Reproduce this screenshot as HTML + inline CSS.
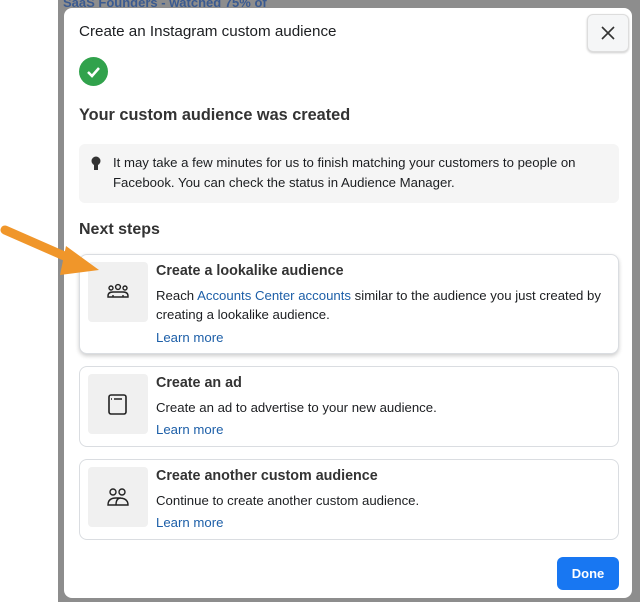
<!DOCTYPE html>
<html><head><style>
body{margin:0;width:640px;height:602px;position:relative;overflow:hidden;background:#fff;font-family:"Liberation Sans",sans-serif;color:#1c1e21}
.ov{position:absolute;left:58px;top:0;width:582px;height:602px;background:#8d8d8d}
.top{position:absolute;left:63px;top:-5px;font-size:13px;color:#3a5a90;font-weight:bold}
.m{position:absolute;left:64px;top:8px;width:568px;height:590px;background:#fff;border-radius:8px}
.t{position:absolute;left:15px;top:15px;font-size:15.2px}
.x{position:absolute;left:523px;top:6px;width:40px;height:36px;border:1px solid #ddd;border-radius:6px;background:#f5f6f7;box-shadow:0 1px 2px rgba(0,0,0,.2)}
.ck{position:absolute;left:15px;top:49px;width:29px;height:29px;border-radius:50%;background:#31a24c}
h2{position:absolute;left:15px;top:98px;margin:0;font-size:16.3px;font-weight:bold;color:#333}
.info{position:absolute;left:15px;top:136px;width:540px;height:59px;background:#f5f5f5;border-radius:6px;font-size:13.2px;line-height:20px}
.info p{margin:0;position:absolute;left:34px;top:9px}
.ns{position:absolute;left:15px;top:213px;font-size:16px;font-weight:bold;color:#333}
.c{position:absolute;left:15px;width:538px;border:1px solid #dadde1;border-radius:8px;background:#fff}
.ib{position:absolute;left:8px;top:7px;width:60px;height:60px;background:#f0f0f0;border-radius:4px}
.ib svg{position:absolute;left:18px;top:18px}
.ct{position:absolute;left:76px;top:8px;font-size:14.3px;font-weight:bold;color:#333}
.cd{position:absolute;left:76px;top:31px;font-size:13.2px;line-height:19px;width:460px}
a{color:#1d5fa8;text-decoration:none}
.lm{position:absolute;left:76px;font-size:13.2px;color:#1d5fa8}
.done{position:absolute;left:493px;top:549px;width:62px;height:33px;background:#1877f2;border-radius:6px;color:#fff;font-weight:bold;font-size:13px;text-align:center;line-height:33px}
</style></head><body>
<div class="ov"></div>
<div class="top">SaaS Founders - watched 75% of</div>
<div class="m">
<div class="t">Create an Instagram custom audience</div>
<div class="x"><svg width="40" height="36"><path d="M14 12l12 12M26 12L14 24" stroke="#333" stroke-width="1.6"/></svg></div>
<div class="ck"><svg width="29" height="29"><path d="M9 15l4 4 7-8" stroke="#fff" stroke-width="2.5" fill="none"/></svg></div>
<h2>Your custom audience was created</h2>
<div class="info"><svg style="position:absolute;left:12px;top:12px" width="10" height="16"><circle cx="5" cy="5" r="4.5" fill="#333"/><rect x="3" y="9" width="4" height="5" fill="#333"/></svg><p>It may take a few minutes for us to finish matching your customers to people on<br>Facebook. You can check the status in Audience Manager.</p></div>
<div class="ns">Next steps</div>
<div class="c" style="top:246px;height:98px;box-shadow:0 2px 4px rgba(0,0,0,.2)">
<div class="ib"><svg width="24" height="24"><g fill="none" stroke="#222" stroke-width="1.4"><circle cx="5" cy="8" r="2"/><circle cx="12" cy="7" r="2.4"/><circle cx="19" cy="8" r="2"/><path d="M2 16q0-4 5-4h10q5 0 5 4v1H2zM7 17v-2M17 17v-2"/></g></svg></div>
<div class="ct">Create a lookalike audience</div>
<div class="cd">Reach <a>Accounts Center accounts</a> similar to the audience you just created by creating a lookalike audience.</div>
<div class="lm" style="top:75px">Learn more</div></div>
<div class="c" style="top:358px;height:79px">
<div class="ib"><svg width="24" height="24"><rect x="3" y="3" width="17" height="19" rx="2" fill="none" stroke="#222" stroke-width="1.6"/><path d="M5 7h1M8 7h8" stroke="#222" stroke-width="1.4"/></svg></div>
<div class="ct">Create an ad</div>
<div class="cd">Create an ad to advertise to your new audience.</div>
<div class="lm" style="top:55px">Learn more</div></div>
<div class="c" style="top:451px;height:79px">
<div class="ib"><svg width="24" height="24"><g fill="none" stroke="#222" stroke-width="1.4"><circle cx="7" cy="7" r="3"/><circle cx="16" cy="7" r="3"/><path d="M2 20q0-7 8-7h3q9 0 9 7zM10 20q0-7 5-7"/></g></svg></div>
<div class="ct">Create another custom audience</div>
<div class="cd">Continue to create another custom audience.</div>
<div class="lm" style="top:55px">Learn more</div></div>
<div class="done">Done</div>
</div>
<svg style="position:absolute;left:0;top:220px" width="110" height="60"><path d="M5 10L78 42" stroke="#f0962a" stroke-width="9" stroke-linecap="round"/><path d="M66 26L99 50 60 55z" fill="#f0962a"/></svg>
</body></html>
